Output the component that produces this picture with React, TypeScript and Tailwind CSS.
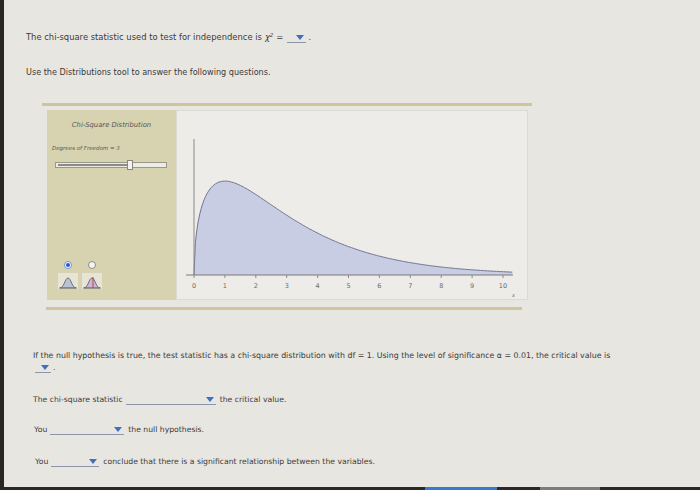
import React from "react";

const font = { fontFamily: '"DejaVu Sans", Verdana, sans-serif' };

function Arrow() {
  return (
    <svg width="8" height="5" viewBox="0 0 8 5" className="shrink-0">
      <path d="M0 0 L8 0 L4 5 Z" fill="#3f6fc0" />
    </svg>
  );
}

function Dropdown({ width }: { width: number }) {
  return (
    <span
      className="inline-flex items-center justify-end border-b border-[#8c95aa] h-[10px] pr-[2px]"
      style={{ width }}
    >
      <Arrow />
    </span>
  );
}

function ChiChart() {
  const x0 = 17;
  const step = 30.9;
  const base = 164;
  const pdf = (v: number) => (Math.sqrt(v) * Math.exp(-v / 2)) / 2.5066;
  const pts: string[] = [];
  for (let i = 0; i <= 220; i++) {
    const v = (i / 220) * 10.3;
    pts.push(`${(x0 + v * step).toFixed(1)},${(base - pdf(v) * 388).toFixed(1)}`);
  }
  const line = "M" + pts.join(" L");
  const area = `M${x0},${base} L${pts.join(" L")} L${(x0 + 10.3 * step).toFixed(1)},${base} Z`;
  return (
    <svg width="351" height="188" viewBox="0 0 351 188">
      <path d={area} fill="#c8cde4" />
      <path d={line} fill="none" stroke="#6f7592" strokeWidth="1" />
      <line x1={x0} y1="28" x2={x0} y2={base} stroke="#8a8a8a" strokeWidth="1" />
      <line x1="9" y1={base} x2="336" y2={base} stroke="#7a7a7a" strokeWidth="1" />
      {Array.from({ length: 11 }).map((_, i) => (
        <g key={i}>
          <line x1={x0 + i * step} y1={base} x2={x0 + i * step} y2={base + 3} stroke="#8a8a8a" />
          <text
            x={x0 + i * step}
            y={base + 13}
            fontSize="6.5"
            fill="#6b6b6b"
            textAnchor="middle"
            style={font}
          >
            {i}
          </text>
        </g>
      ))}
      <text x="335" y="186" fontSize="5" fill="#666" fontStyle="italic" style={font}>
        x
      </text>
    </svg>
  );
}

function BellIcon({ split }: { split?: boolean }) {
  return (
    <div className="w-[20px] h-[16px] bg-[#e6e4d6] flex items-end justify-center">
      <svg width="18" height="13" viewBox="0 0 18 13">
        <path
          d="M1 12 C5 12 6 2 9 2 C12 2 13 12 17 12 Z"
          fill={split ? "#c9b6d9" : "#b9c3d8"}
          stroke="#555"
          strokeWidth="0.8"
        />
        {split && <line x1="10" y1="1" x2="10" y2="12" stroke="#c0392b" strokeWidth="0.9" />}
        <line x1="0" y1="12" x2="18" y2="12" stroke="#666" strokeWidth="0.6" />
      </svg>
    </div>
  );
}

export default function App() {
  return (
    <div
      className="w-[700px] h-[490px] bg-[#e8e6e1] flex overflow-hidden text-[#3a3a3a]"
      style={font}
    >
      <div className="w-[4px] h-full bg-[#2a2624] shrink-0" />
      <div className="flex-1 flex flex-col">
        <div className="flex-1 flex flex-col pl-[22px]">
          <div className="mt-[31px] h-[12px] leading-[12px] text-[8.4px] flex items-center">
            <span>The chi-square statistic used to test for independence is</span>
            <span className="ml-[3px] italic">
              χ<sup className="text-[5.5px]">2</sup>
            </span>
            <span className="ml-[3px]">=</span>
            <span className="ml-[4px]">
              <Dropdown width={19} />
            </span>
            <span className="ml-[2px]">.</span>
          </div>
          <div className="mt-[23px] h-[12px] leading-[12px] text-[8.1px]">
            Use the Distributions tool to answer the following questions.
          </div>

          <div className="mt-[25px] ml-[16px] w-[490px] h-[3px] bg-[#cfc49e]" />

          <div className="mt-[4px] ml-[21px] w-[481px] h-[190px] flex bg-[#edebe6]">
            <div className="w-[129px] h-full bg-[#d7d3b1] flex flex-col">
              <div className="mt-[10px] text-center italic text-[6.8px] text-[#555]">
                Chi-Square Distribution
              </div>
              <div className="mt-[14px] ml-[5px] italic text-[5.5px] text-[#555]">
                Degrees of Freedom = 3
              </div>
              <div className="mt-[10px] ml-[8px] w-[112px] h-[6px] bg-[#ecebe4] border border-[#9a988c] flex items-center relative">
                <div className="ml-[2px] w-[70px] h-[2px] bg-[#8e8c82]" />
                <div className="absolute left-[71px] top-[-3px] w-[6px] h-[10px] bg-[#f3f2ec] border border-[#8a887e]" />
              </div>
              <div className="mt-[93px] ml-[17px] flex gap-[16px] items-center">
                <div className="w-[8px] h-[8px] rounded-full bg-[#fff] border border-[#6f8ed6] flex items-center justify-center">
                  <div className="w-[4px] h-[4px] rounded-full bg-[#2a56c6]" />
                </div>
                <div className="w-[8px] h-[8px] rounded-full bg-[#f6f5f0] border border-[#8a8a8a]" />
              </div>
              <div className="mt-[4px] ml-[11px] flex gap-[4px]">
                <BellIcon />
                <BellIcon split />
              </div>
            </div>
            <div className="w-[352px] h-[190px] border border-[#dcdad3] bg-[#eeece8]">
              <ChiChart />
            </div>
          </div>

          <div className="mt-[7px] ml-[20px] w-[476px] h-[3px] bg-[#cfc49e]" />

          <div className="mt-[40px] ml-[7px] h-[12px] leading-[12px] text-[7.85px] whitespace-nowrap">
            If the null hypothesis is true, the test statistic has a chi-square distribution with df = 1. Using the level of significance α = 0.01, the critical value is
          </div>
          <div className="ml-[9px] h-[12px] flex items-center">
            <Dropdown width={16} />
            <span className="ml-[2px] text-[7.7px]">.</span>
          </div>

          <div className="mt-[20px] ml-[7px] h-[12px] flex items-center text-[7.7px]">
            <span>The chi-square statistic</span>
            <span className="ml-[3px]">
              <Dropdown width={90} />
            </span>
            <span className="ml-[4px]">the critical value.</span>
          </div>

          <div className="mt-[18px] ml-[8px] h-[12px] flex items-center text-[7.7px]">
            <span>You</span>
            <span className="ml-[3px]">
              <Dropdown width={74} />
            </span>
            <span className="ml-[4px]">the null hypothesis.</span>
          </div>

          <div className="mt-[20px] ml-[9px] h-[12px] flex items-center text-[7.7px]">
            <span>You</span>
            <span className="ml-[3px]">
              <Dropdown width={48} />
            </span>
            <span className="ml-[4px]">conclude that there is a significant relationship between the variables.</span>
          </div>
        </div>
        <div className="h-[3px] bg-[#2c2826] flex">
          <div className="ml-[421px] w-[72px] h-full bg-[#3b78cf]" />
          <div className="ml-[43px] w-[60px] h-full bg-[#7d7d80]" />
        </div>
      </div>
    </div>
  );
}
